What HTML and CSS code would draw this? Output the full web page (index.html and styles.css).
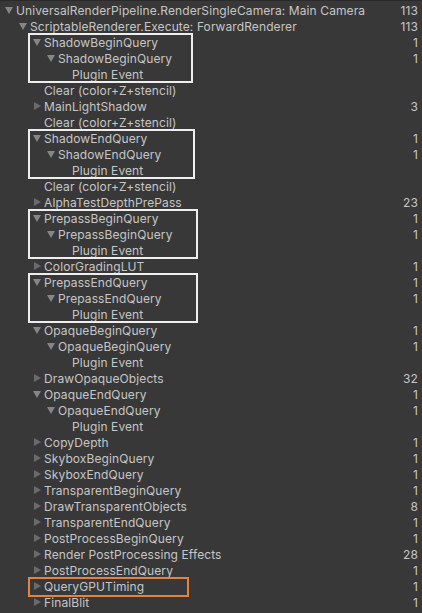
FILE: index.html
```html
<!DOCTYPE html>
<html>
<head>
<meta charset="utf-8">
<link rel="stylesheet" href="styles.css">
</head>
<body>
<div class="tree">
  <div class="row"><span class="label l0"><span class="arr open"></span>UniversalRenderPipeline.RenderSingleCamera: Main Camera</span><span class="num">113</span></div>
  <div class="row"><span class="label l1"><span class="arr open"></span>ScriptableRenderer.Execute: ForwardRenderer</span><span class="num">113</span></div>
  <div class="group box-a">
    <div class="row"><span class="label l2"><span class="arr open"></span>ShadowBeginQuery</span><span class="num">1</span></div>
    <div class="row"><span class="label l3"><span class="arr open"></span>ShadowBeginQuery</span><span class="num">1</span></div>
    <div class="row"><span class="label l4"><span class="arr"></span>Plugin Event</span><span class="num"></span></div>
  </div>
  <div class="row"><span class="label l2"><span class="arr"></span>Clear (color+Z+stencil)</span><span class="num"></span></div>
  <div class="row"><span class="label l2"><span class="arr shut"></span>MainLightShadow</span><span class="num">3</span></div>
  <div class="row"><span class="label l2"><span class="arr"></span>Clear (color+Z+stencil)</span><span class="num"></span></div>
  <div class="group box-b">
    <div class="row"><span class="label l2"><span class="arr open"></span>ShadowEndQuery</span><span class="num">1</span></div>
    <div class="row"><span class="label l3"><span class="arr open"></span>ShadowEndQuery</span><span class="num">1</span></div>
    <div class="row"><span class="label l4"><span class="arr"></span>Plugin Event</span><span class="num"></span></div>
  </div>
  <div class="row"><span class="label l2"><span class="arr"></span>Clear (color+Z+stencil)</span><span class="num"></span></div>
  <div class="row"><span class="label l2"><span class="arr shut"></span>AlphaTestDepthPrePass</span><span class="num">23</span></div>
  <div class="group box-c">
    <div class="row"><span class="label l2"><span class="arr open"></span>PrepassBeginQuery</span><span class="num">1</span></div>
    <div class="row"><span class="label l3"><span class="arr open"></span>PrepassBeginQuery</span><span class="num">1</span></div>
    <div class="row"><span class="label l4"><span class="arr"></span>Plugin Event</span><span class="num"></span></div>
  </div>
  <div class="row"><span class="label l2"><span class="arr shut"></span>ColorGradingLUT</span><span class="num">1</span></div>
  <div class="group box-c">
    <div class="row"><span class="label l2"><span class="arr open"></span>PrepassEndQuery</span><span class="num">1</span></div>
    <div class="row"><span class="label l3"><span class="arr open"></span>PrepassEndQuery</span><span class="num">1</span></div>
    <div class="row"><span class="label l4"><span class="arr"></span>Plugin Event</span><span class="num"></span></div>
  </div>
  <div class="row"><span class="label l2"><span class="arr open"></span>OpaqueBeginQuery</span><span class="num">1</span></div>
  <div class="row"><span class="label l3"><span class="arr open"></span>OpaqueBeginQuery</span><span class="num">1</span></div>
  <div class="row"><span class="label l4"><span class="arr"></span>Plugin Event</span><span class="num"></span></div>
  <div class="row"><span class="label l2"><span class="arr shut"></span>DrawOpaqueObjects</span><span class="num">32</span></div>
  <div class="row"><span class="label l2"><span class="arr open"></span>OpaqueEndQuery</span><span class="num">1</span></div>
  <div class="row"><span class="label l3"><span class="arr open"></span>OpaqueEndQuery</span><span class="num">1</span></div>
  <div class="row"><span class="label l4"><span class="arr"></span>Plugin Event</span><span class="num"></span></div>
  <div class="row"><span class="label l2"><span class="arr shut"></span>CopyDepth</span><span class="num">1</span></div>
  <div class="row"><span class="label l2"><span class="arr shut"></span>SkyboxBeginQuery</span><span class="num">1</span></div>
  <div class="row"><span class="label l2"><span class="arr shut"></span>SkyboxEndQuery</span><span class="num">1</span></div>
  <div class="row"><span class="label l2"><span class="arr shut"></span>TransparentBeginQuery</span><span class="num">1</span></div>
  <div class="row"><span class="label l2"><span class="arr shut"></span>DrawTransparentObjects</span><span class="num">8</span></div>
  <div class="row"><span class="label l2"><span class="arr shut"></span>TransparentEndQuery</span><span class="num">1</span></div>
  <div class="row"><span class="label l2"><span class="arr shut"></span>PostProcessBeginQuery</span><span class="num">1</span></div>
  <div class="row"><span class="label l2"><span class="arr shut"></span>Render PostProcessing Effects</span><span class="num">28</span></div>
  <div class="row"><span class="label l2"><span class="arr shut"></span>PostProcessEndQuery</span><span class="num">1</span></div>
  <div class="group box-o">
    <div class="row"><span class="label l2"><span class="arr shut"></span>QueryGPUTiming</span><span class="num">1</span></div>
  </div>
  <div class="row"><span class="label l2"><span class="arr shut"></span>FinalBlit</span><span class="num">1</span></div>
</div>
</body>
</html>
```

FILE: styles.css
```css
html, body {
  margin: 0;
  padding: 0;
  background: #383838;
}
body {
  width: 422px;
  height: 613px;
  overflow: hidden;
  font-family: Inter, "Liberation Sans", sans-serif;
  font-size: 12px;
  letter-spacing: 0.1px;
  color: #c6c6c6;
}
.tree {
  border-top: 1px solid #2a2a2a;
  padding-top: 1px;
}
.row {
  display: flex;
  align-items: center;
  height: 16px;
  white-space: nowrap;
}
.label {
  display: flex;
  align-items: center;
  flex: 1;
}
.l0 { padding-left: 2px; }
.l1 { padding-left: 16px; }
.l2 { padding-left: 30px; }
.l3 { padding-left: 44px; }
.l4 { padding-left: 58px; }
.arr {
  width: 14px;
  height: 16px;
  flex: none;
  display: flex;
  align-items: center;
  justify-content: flex-end;
  padding-right: 3px;
  box-sizing: border-box;
}
.arr.open::before {
  content: "";
  width: 0;
  height: 0;
  border-left: 4px solid transparent;
  border-right: 4px solid transparent;
  border-top: 7px solid #858585;
  margin-top: 1px;
}
.arr.shut::before {
  content: "";
  width: 0;
  height: 0;
  border-top: 4.5px solid transparent;
  border-bottom: 4.5px solid transparent;
  border-left: 7px solid #6a6a6a;
  margin-right: 0.5px;
}
.num {
  padding-right: 4px;
  text-align: right;
}
.group {
  position: relative;
}
.group::before {
  content: "";
  position: absolute;
  left: 28px;
  top: -1px;
  bottom: -1px;
  border: 2px solid #eeeeee;
  box-sizing: border-box;
  pointer-events: none;
}
.box-a::before { width: 165px; }
.box-b::before { width: 167px; }
.box-c::before { width: 170px; }
.box-o::before {
  width: 161px;
  top: -1px;
  bottom: -3px;
  border-color: #e3843d;
}
```
